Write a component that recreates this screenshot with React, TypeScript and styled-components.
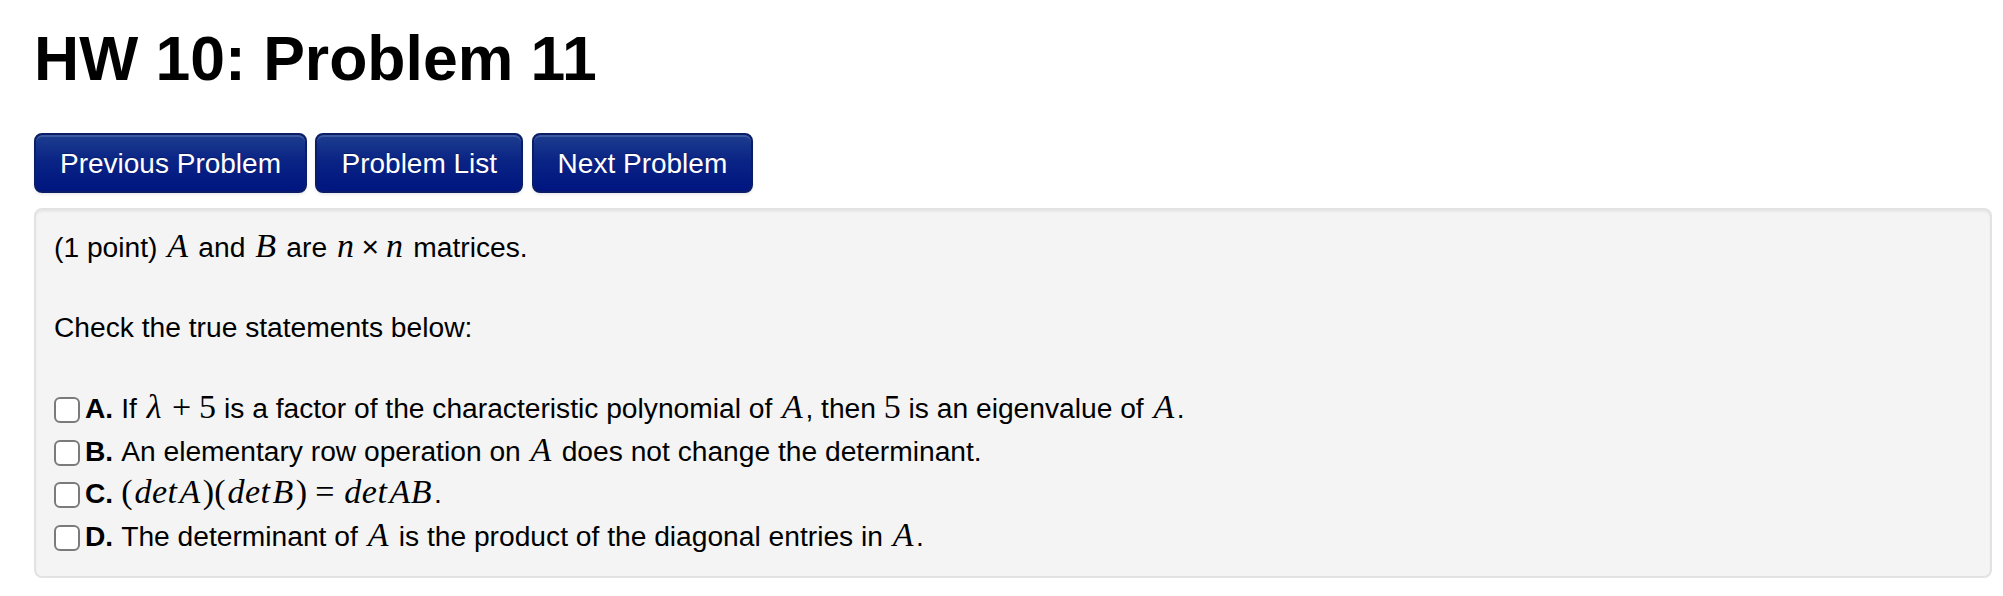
import React from "react";
import styled, { createGlobalStyle } from "styled-components";

const GlobalStyle = createGlobalStyle`
  html, body {
    margin: 0;
    padding: 0;
    background: #ffffff;
  }
  body {
    font-family: "Liberation Sans", Arial, Helvetica, sans-serif;
    color: #000;
  }
`;

const Page = styled.div`
  padding: 0 11px 0 34px;
  display: flex;
  flex-direction: column;
`;

const Title = styled.h1`
  margin: 23px 0 0 0;
  font-family: "Liberation Sans", Arial, Helvetica, sans-serif;
  font-weight: 700;
  font-size: 62.5px;
  line-height: 71px;
  color: #000;
`;

const Nav = styled.div`
  display: flex;
  gap: 8.5px;
  margin-top: 39px;
`;

const NavButton = styled.button`
  box-sizing: border-box;
  height: 60px;
  padding: 0 24px;
  border: 2px solid #0b1d66;
  border-radius: 8px;
  background: linear-gradient(to bottom, #1d3d8f 0%, #0a2485 45%, #001580 100%);
  box-shadow: inset 0 2px 0 rgba(255, 255, 255, 0.15), 0 2px 3px rgba(0, 0, 0, 0.08);
  color: #ffffff;
  font-family: "Liberation Sans", Arial, Helvetica, sans-serif;
  font-size: 28px;
  line-height: 31px;
  text-shadow: 0 -1px 0 rgba(0, 0, 0, 0.25);
  cursor: pointer;
  white-space: nowrap;
`;

const Well = styled.div`
  box-sizing: border-box;
  margin-top: 15px;
  min-height: 370px;
  padding: 17px 18px 18px 18px;
  background: #f4f4f4;
  border: 2px solid #e2e2e2;
  border-radius: 8px;
  box-shadow: inset 0 2px 2px rgba(0, 0, 0, 0.05);
  font-size: 28.2px;
  line-height: 40px;
`;

const Para = styled.div<{ $gap?: number }>`
  margin-top: ${(p) => p.$gap ?? 0}px;
`;

const Options = styled.div`
  margin-top: 40px;
  display: flex;
  flex-direction: column;
`;

const Row = styled.label`
  display: flex;
  align-items: flex-start;
  line-height: 42.7px;
  height: 42.7px;
`;

const Check = styled.input.attrs({ type: "checkbox" })`
  appearance: none;
  -webkit-appearance: none;
  box-sizing: border-box;
  width: 26px;
  height: 26px;
  margin: 10px 5px 0 0;
  border: 2px solid #7b7b7b;
  border-radius: 6px;
  background: #ffffff;
  flex: none;
`;

const Letter = styled.b`
  font-weight: 700;
  margin-right: 8px;
`;

const M = styled.span`
  font-family: "Liberation Serif", "Times New Roman", serif;
  font-style: italic;
  font-size: 34px;
  line-height: 1;
  letter-spacing: 0.5px;
  margin: 0 2px;
`;

const MU = styled.span<{ $space?: number }>`
  font-family: "Liberation Serif", "Times New Roman", serif;
  font-style: normal;
  font-size: 34px;
  line-height: 1;
  margin: 0 ${(p) => p.$space ?? 0}px;
`;

const Times = styled.span`
  font-family: "Liberation Sans", Arial, sans-serif;
  font-size: 30px;
  margin: 0 5px;
  line-height: 1;
`;

const Det = styled.span`
  margin-right: 2px;
`;

export default function App() {
  return (
    <>
      <GlobalStyle />
      <Page>
        <Title>HW 10: Problem 11</Title>
        <Nav>
          <NavButton>Previous Problem</NavButton>
          <NavButton>Problem List</NavButton>
          <NavButton>Next Problem</NavButton>
        </Nav>
        <Well>
          <Para>
            (1 point) <M>A</M> and <M>B</M> are <M>n</M>
            <Times>×</Times>
            <M>n</M> matrices.
          </Para>
          <Para $gap={40}>Check the true statements below:</Para>
          <Options>
            <Row>
              <Check />
              <span>
                <Letter>A.</Letter>If <M>λ</M>
                <MU $space={8}>+</MU>
                <MU>5</MU> is a factor of the characteristic polynomial of <M>A</M>, then{" "}
                <MU>5</MU> is an eigenvalue of <M>A</M>.
              </span>
            </Row>
            <Row>
              <Check />
              <span>
                <Letter>B.</Letter>An elementary row operation on <M>A</M> does not change the
                determinant.
              </span>
            </Row>
            <Row>
              <Check />
              <span>
                <Letter>C.</Letter>
                <MU>(</MU>
                <M>
                  <Det>det</Det>A
                </M>
                <MU>)(</MU>
                <M>
                  <Det>det</Det>B
                </M>
                <MU>)</MU>
                <MU $space={8}>=</MU>
                <M>
                  <Det>det</Det>AB
                </M>
                .
              </span>
            </Row>
            <Row>
              <Check />
              <span>
                <Letter>D.</Letter>The determinant of <M>A</M> is the product of the diagonal
                entries in <M>A</M>.
              </span>
            </Row>
          </Options>
        </Well>
      </Page>
    </>
  );
}
